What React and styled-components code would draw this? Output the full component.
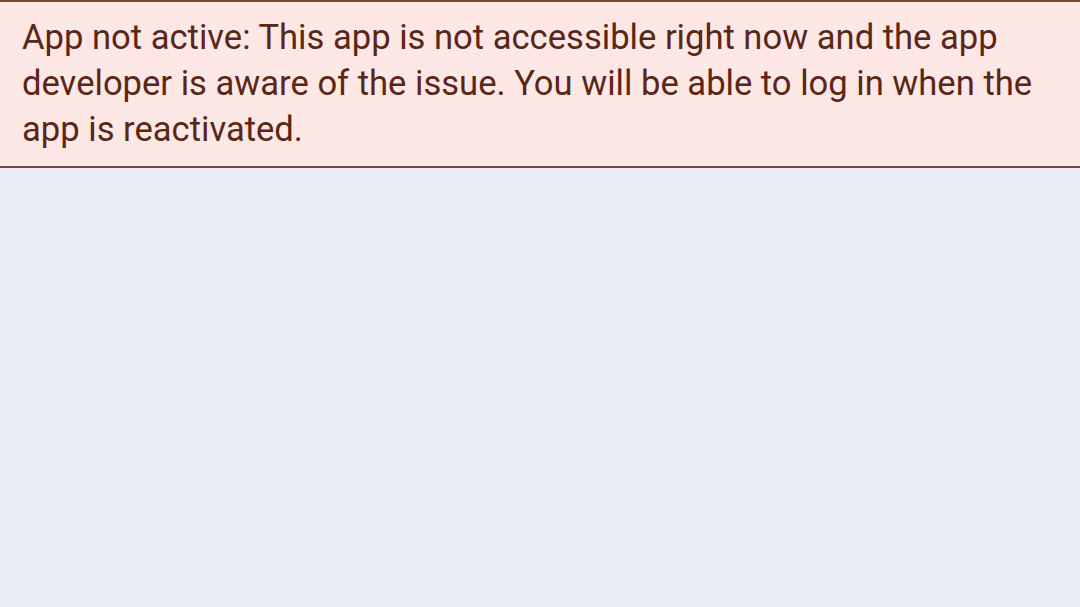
import React from 'react';
import styled, {createGlobalStyle} from 'styled-components';

const Global = createGlobalStyle`
  html, body {
    margin: 0;
    padding: 0;
    height: 100%;
    background: #e9edf6;
  }
  #root {
    min-height: 100%;
  }
`;

const Page = styled.div`
  display: flex;
  flex-direction: column;
  min-height: 607px;
  background: #e9edf6;
  font-family: Roboto, "Liberation Sans", sans-serif;
`;

const Banner = styled.div`
  background: #fee8e5;
  border-top: 2px solid #7b4537;
  border-bottom: 2px solid #7b4537;
  padding: 12px 22px 14px;
  color: #5c2616;
  font-size: 34.6px;
  line-height: 46px;
`;

export default function App() {
  return (
    <Page>
      <Global />
      <Banner>
        App not active: This app is not accessible right now and the app developer is aware
        of the issue. You will be able to log in when the app is reactivated.
      </Banner>
    </Page>
  );
}
